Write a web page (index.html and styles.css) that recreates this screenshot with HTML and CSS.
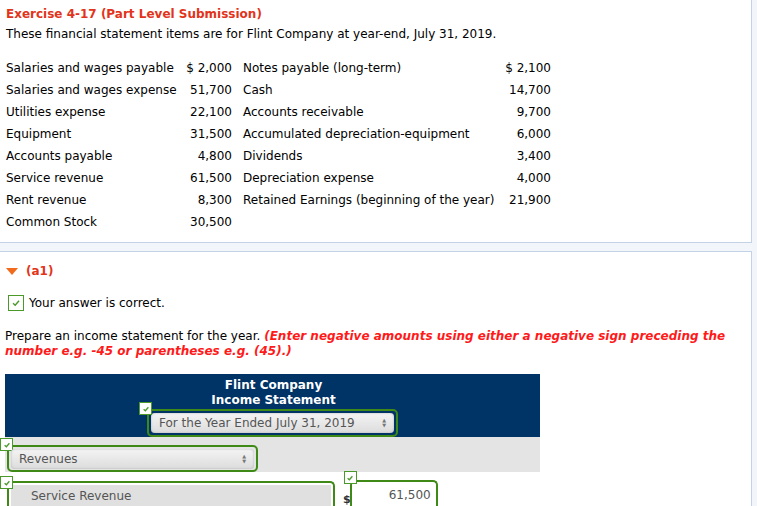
FILE: index.html
```html
<!DOCTYPE html>
<html>
<head>
<meta charset="utf-8">
<link rel="stylesheet" href="styles.css">
</head>
<body>
<div class="page">
  <section class="card card-top">
    <h1 class="title">Exercise 4-17 (Part Level Submission)</h1>
    <p class="intro">These financial statement items are for Flint Company at year-end, July 31, 2019.</p>
    <table class="items">
      <colgroup><col class="c1"><col class="c2"><col class="c3"><col class="c4"></colgroup>
      <tr><td class="lbl">Salaries and wages payable</td><td class="amt">$ 2,000</td><td class="lbl2">Notes payable (long-term)</td><td class="amt2">$ 2,100</td></tr>
      <tr><td class="lbl">Salaries and wages expense</td><td class="amt">51,700</td><td class="lbl2">Cash</td><td class="amt2">14,700</td></tr>
      <tr><td class="lbl">Utilities expense</td><td class="amt">22,100</td><td class="lbl2">Accounts receivable</td><td class="amt2">9,700</td></tr>
      <tr><td class="lbl">Equipment</td><td class="amt">31,500</td><td class="lbl2">Accumulated depreciation-equipment</td><td class="amt2">6,000</td></tr>
      <tr><td class="lbl">Accounts payable</td><td class="amt">4,800</td><td class="lbl2">Dividends</td><td class="amt2">3,400</td></tr>
      <tr><td class="lbl">Service revenue</td><td class="amt">61,500</td><td class="lbl2">Depreciation expense</td><td class="amt2">4,000</td></tr>
      <tr><td class="lbl">Rent revenue</td><td class="amt">8,300</td><td class="lbl2">Retained Earnings (beginning of the year)</td><td class="amt2">21,900</td></tr>
      <tr><td class="lbl">Common Stock</td><td class="amt">30,500</td><td class="lbl2"></td><td class="amt2"></td></tr>
    </table>
  </section>
  <section class="card card-part">
    <div class="part-head"><span class="tri"></span><span class="part-name">(a1)</span></div>
    <div class="correct"><span class="chk big"><svg viewBox="0 0 10 10" width="10" height="10"><path d="M2 5.2 L4.2 7.2 L8 2.8" fill="none" stroke="#4a9a2a" stroke-width="1.4"/></svg></span>Your answer is correct.</div>
    <p class="prompt">Prepare an income statement for the year. <em>(Enter negative amounts using either a negative sign preceding the number e.g. -45 or parentheses e.g. (45).)</em></p>
    <div class="stmt">
      <div class="stmt-head">
        <div class="co">Flint Company</div>
        <div class="co">Income Statement</div>
        <div class="period-wrap">
          <span class="chk small abs-chk"><svg viewBox="0 0 10 10" width="8" height="8"><path d="M2 5.2 L4.2 7.2 L8 2.8" fill="none" stroke="#4a9a2a" stroke-width="1.6"/></svg></span>
          <div class="gbox period"><div class="sel">For the Year Ended July 31, 2019<span class="arr">&#9650;<br>&#9660;</span></div></div>
        </div>
      </div>
      <div class="stmt-grey">
        <span class="chk small abs-chk2"><svg viewBox="0 0 10 10" width="8" height="8"><path d="M2 5.2 L4.2 7.2 L8 2.8" fill="none" stroke="#4a9a2a" stroke-width="1.6"/></svg></span>
        <div class="gbox rev"><div class="sel">Revenues<span class="arr">&#9650;<br>&#9660;</span></div></div>
      </div>
      <div class="stmt-row">
        <div class="cell-lbl">
          <span class="chk small abs-chk3"><svg viewBox="0 0 10 10" width="8" height="8"><path d="M2 5.2 L4.2 7.2 L8 2.8" fill="none" stroke="#4a9a2a" stroke-width="1.6"/></svg></span>
          <div class="gbox svc"><div class="inp">Service Revenue</div></div>
        </div>
        <span class="dollar">$</span>
        <div class="cell-amt">
          <span class="chk small abs-chk4"><svg viewBox="0 0 10 10" width="8" height="8"><path d="M2 5.2 L4.2 7.2 L8 2.8" fill="none" stroke="#4a9a2a" stroke-width="1.6"/></svg></span>
          <div class="gbox amtbox"><div class="inp num">61,500</div></div>
        </div>
      </div>
    </div>
  </section>
</div>
</body>
</html>
```
FILE: styles.css
```css
html, body {
  margin: 0;
  padding: 0;
  background: #f2f6fb;
}
body {
  font-family: "DejaVu Sans", Verdana, sans-serif;
  font-size: 12px;
  color: #000;
  overflow: hidden;
}
.page {
  width: 752px;
}
.card {
  background: #fff;
  border-right: 1px solid #c3d2e6;
}
.card-top {
  border-bottom: 1px solid #c3d2e6;
  padding: 6px 0 12px 6px;
  height: 224px;
}
.title {
  margin: 0;
  font-size: 12px;
  font-weight: bold;
  color: #e2341a;
  line-height: 16px;
}
.intro {
  margin: 4px 0 0;
  line-height: 16px;
}
.items {
  border-collapse: collapse;
  table-layout: fixed;
  width: 545px;
  margin-top: 15px;
}
.items .c1 { width: 176px; }
.items .c2 { width: 61px; }
.items .c3 { width: 252px; }
.items .c4 { width: 56px; }
.items td {
  padding: 0;
  height: 22px;
  line-height: 22px;
  white-space: nowrap;
  vertical-align: middle;
  overflow: visible;
}
.items .amt { text-align: right; padding-right: 11px; }
.items .amt2 { text-align: right; }
.card-part {
  margin-top: 8px;
  border-top: 1px solid #c3d2e6;
  height: 260px;
  padding: 10px 0 0 0;
}
.part-head {
  display: flex;
  align-items: center;
  padding-left: 6px;
  height: 18px;
}
.tri {
  width: 0;
  height: 0;
  border-left: 6px solid transparent;
  border-right: 6px solid transparent;
  border-top: 7px solid #f26a1b;
  margin-right: 8px;
}
.part-name {
  color: #e2341a;
  font-weight: bold;
  font-size: 12px;
}
.correct {
  display: flex;
  align-items: center;
  margin: 15px 0 0 8px;
  height: 16px;
}
.chk {
  display: inline-flex;
  align-items: center;
  justify-content: center;
  background: #fff;
  border: 1px solid #4a9a2a;
  box-sizing: border-box;
}
.chk.big {
  width: 16px;
  height: 16px;
  margin-right: 5px;
}
.chk.small {
  width: 13px;
  height: 13px;
}
.prompt {
  margin: 18px 0 0 5px;
  line-height: 15px;
  width: 730px;
}
.prompt em {
  color: #ff1a1a;
  font-weight: bold;
}
.stmt {
  margin: 15px 0 0 5px;
  width: 535px;
}
.stmt-head {
  background: #003366;
  color: #fff;
  height: 63px;
  box-sizing: border-box;
  padding-top: 4px;
  text-align: center;
}
.co {
  font-weight: bold;
  font-size: 12px;
  line-height: 15px;
  padding-left: 2px;
}
.period-wrap {
  position: relative;
  width: 251px;
  margin: 1px 0 0 142px;
  text-align: left;
}
.abs-chk {
  position: absolute;
  left: -8px;
  top: -7px;
  z-index: 2;
}
.gbox {
  border: 2px solid #3f8a17;
  border-radius: 5px;
  box-sizing: border-box;
  padding: 2px;
}
.sel {
  position: relative;
  background: linear-gradient(#f4f4f4, #dcdcdc);
  border-radius: 4px;
  color: #555;
  line-height: 20px;
  height: 20px;
  padding-left: 8px;
  box-shadow: inset 0 0 2px #aaa;
}
.period { height: 28px; }
.arr {
  position: absolute;
  right: 8px;
  top: 5px;
  font-size: 5px;
  line-height: 5px;
  color: #777;
}
.stmt-grey {
  position: relative;
  background: #e4e4e4;
  height: 35px;
  padding: 8px 0 0 2px;
  box-sizing: border-box;
}
.abs-chk2 {
  position: absolute;
  left: -5px;
  top: 1px;
}
.rev {
  width: 251px;
  height: 27px;
}
.stmt-row {
  position: relative;
  display: flex;
  align-items: flex-start;
  height: 40px;
}
.cell-lbl {
  position: relative;
  padding: 9px 0 0 2px;
}
.abs-chk3 {
  position: absolute;
  left: -5px;
  top: 4px;
}
.svc {
  width: 328px;
  height: 40px;
  border-bottom: none;
  border-radius: 5px 5px 0 0;
}
.inp {
  background: #e0e0e0;
  color: #555;
  height: 40px;
  line-height: 22px;
  padding-left: 20px;
}
.dollar {
  font-size: 11px;
  margin: 21px 0 0 8px;
  font-weight: bold;
  color: #333;
}
.cell-amt {
  position: relative;
  padding: 8px 0 0 0;
  margin-left: -1px;
}
.abs-chk4 {
  position: absolute;
  left: -6px;
  top: -1px;
}
.amtbox {
  width: 88px;
  height: 40px;
  border-bottom: none;
  border-radius: 5px 5px 0 0;
}
.num {
  text-align: right;
  padding: 0 3px 0 0;
  background: #fff;
}
```
